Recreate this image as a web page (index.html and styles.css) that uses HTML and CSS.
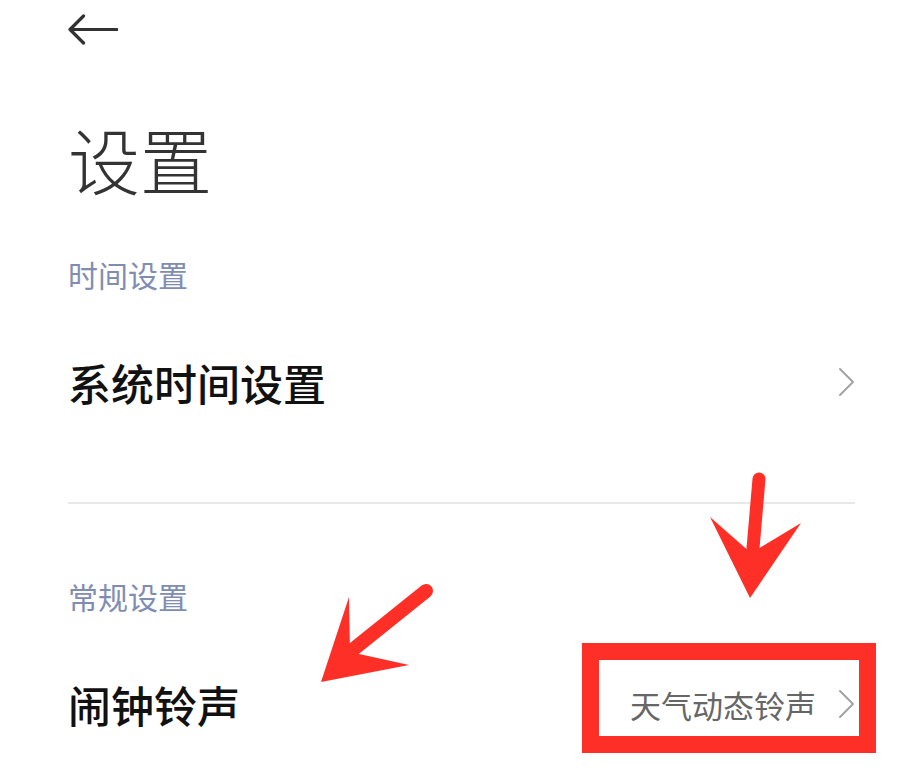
FILE: index.html
```html
<!DOCTYPE html>
<html lang="zh-CN">
<head>
  <meta charset="UTF-8" />
  <meta name="viewport" content="width=device-width, initial-scale=1.0"/>
  <title>设置</title>
  <link rel="stylesheet" href="styles.css">
</head>
<body>
  <div class="page">
    <!-- Верхняя панель -->
    <div class="header">
      <svg class="back-btn" width="50" height="32" viewBox="0 0 50 32">
        <path d="M2 15.5 H49 M15.5 2 L2 15.5 L15.5 29" fill="none" stroke="#333" stroke-width="3.2" stroke-linecap="round" stroke-linejoin="round"/>
      </svg>
    </div>

    <h1 class="page-title">设置</h1>

    <div class="section-label">时间设置</div>
    <div class="row">
      <span class="row-title">系统时间设置</span>
      <span class="row-right">
        <svg class="chevron" width="17" height="30" viewBox="0 0 17 30">
          <path d="M2 2 L15 15 L2 28" fill="none" stroke="#a3a3a3" stroke-width="2" stroke-linecap="round" stroke-linejoin="round"/>
        </svg>
      </span>
    </div>

    <div class="divider"></div>

    <div class="section-label second">常规设置</div>
    <div class="row">
      <span class="row-title">闹钟铃声</span>
      <span class="row-right">
        <span class="row-value">天气动态铃声</span>
        <svg class="chevron" width="17" height="30" viewBox="0 0 17 30">
          <path d="M2 2 L15 15 L2 28" fill="none" stroke="#a3a3a3" stroke-width="2" stroke-linecap="round" stroke-linejoin="round"/>
        </svg>
      </span>
    </div>
  </div>

  <!-- Пометки поверх скриншота -->
  <div class="mark-box"></div>
  <svg class="marks" width="912" height="768" viewBox="0 0 912 768">
    <line x1="759" y1="479" x2="752" y2="560" stroke="#fe2f26" stroke-width="13" stroke-linecap="round"/>
    <polygon points="710,517 751,553 801,523 750,598" fill="#fe2f26"/>
    <line x1="426" y1="591" x2="350" y2="652" stroke="#fe2f26" stroke-width="14" stroke-linecap="round"/>
    <polygon points="321,682 349,597 350,652 409,665" fill="#fe2f26"/>
  </svg>
</body>
</html>
```

FILE: styles.css
```css
body {
  margin: 0;
  background: #fff;
  font-family: "Noto Sans CJK SC", "Noto Sans", sans-serif;
  color: #111;
}

.page {
  width: 912px;
  height: 768px;
  box-sizing: border-box;
  padding: 0 57px 0 68px;
  overflow: hidden;
}

.header {
  height: 60px;
  padding-top: 14px;
  box-sizing: border-box;
}

.back-btn {
  display: block;
}

.page-title {
  margin: 62px 0 0;
  font-size: 72px;
  line-height: 72px;
  font-weight: 300;
  color: #333;
}

.section-label {
  margin-top: 65px;
  margin-bottom: 38px;
  font-size: 30px;
  line-height: 30px;
  color: #7f8db3;
}

.section-label.second {
  margin-top: 77px;
  margin-bottom: 38px;
}

.row {
  height: 110px;
  display: flex;
  align-items: center;
  justify-content: space-between;
}

.row-title {
  font-size: 43px;
  font-weight: 500;
  color: #111;
}

.row-right {
  display: flex;
  align-items: center;
  gap: 22px;
}

.row-value {
  font-size: 31px;
  color: #666;
}

.chevron {
  display: block;
}

.divider {
  margin-top: 65px;
  height: 2px;
  background: #e8e8e8;
}

.mark-box {
  position: absolute;
  left: 582px;
  top: 643px;
  width: 294px;
  height: 110px;
  box-sizing: border-box;
  border: 17px solid #fe2f26;
}

.marks {
  position: absolute;
  left: 0;
  top: 0;
  pointer-events: none;
}
```
